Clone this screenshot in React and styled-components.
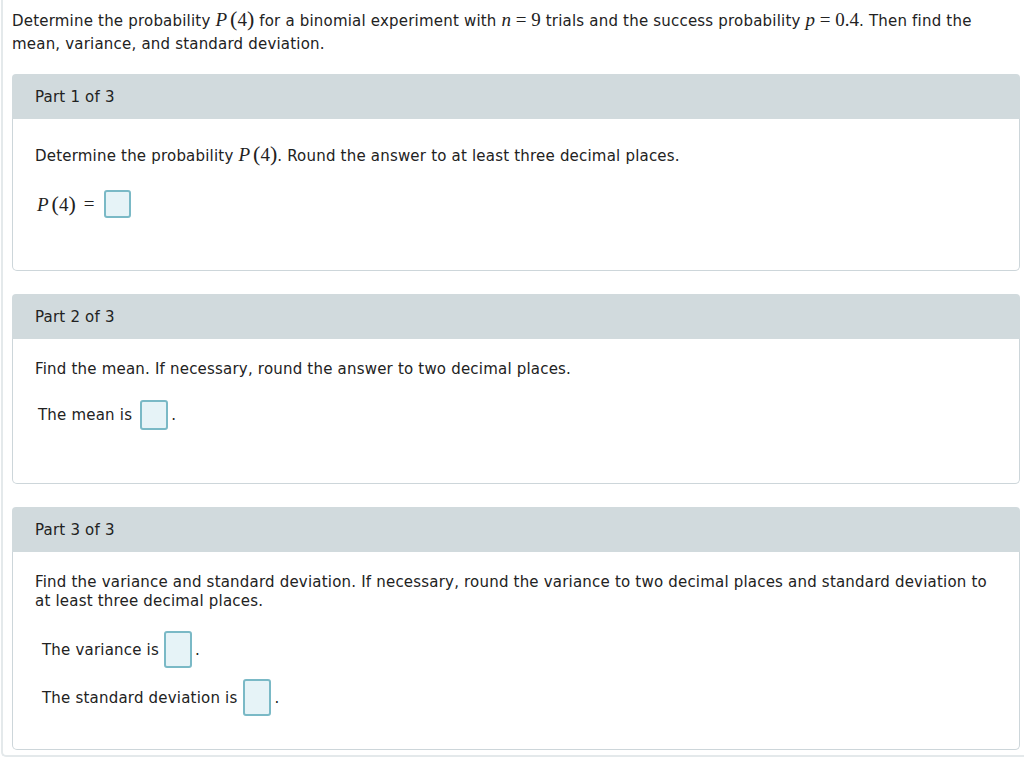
import styled, { createGlobalStyle } from "styled-components";

const GlobalStyle = createGlobalStyle`
  body {
    margin: 0;
    background: #fff;
    font-family: "DejaVu Sans", Verdana, sans-serif;
    font-size: 15px;
    letter-spacing: 0.2px;
    color: #222;
  }
`;

// OUTER FRAME
const Frame = styled.div`
  margin-left: 1px;
  height: 748px;
  border-left: 2px solid #e4e9eb;
  border-bottom: 2px solid #e4e9eb;
  border-bottom-left-radius: 5px;
  padding: 7px 4px 0 9px;
`;

const Intro = styled.p`
  margin: 0 0 18px;
  line-height: 23px;
`;

const Panel = styled.section`
  margin-bottom: 23px;
`;

const Header = styled.div`
  height: 45px;
  display: flex;
  align-items: center;
  padding-left: 23px;
  background: #d1dadd;
  border-radius: 4px 4px 0 0;
`;

const Body = styled.div`
  box-sizing: border-box;
  height: ${(props) => props.h}px;
  padding: 21px 22px 0;
  border: 1px solid #cdd6da;
  border-top: none;
  border-radius: 0 0 5px 5px;
  background: #fff;
`;

const Text = styled.p`
  margin: 0;
  line-height: ${(props) => (props.tall ? "28px" : "19px")};
`;

const Row = styled.div`
  display: flex;
  align-items: center;
  margin-top: ${(props) => props.mt}px;
  padding-left: ${(props) => props.indent || 0}px;
`;

const Box = styled.span`
  display: inline-block;
  box-sizing: border-box;
  width: ${(props) => props.w}px;
  height: ${(props) => props.h}px;
  margin: 0 3px 0 ${(props) => props.ml || 7}px;
  background: #e6f3f7;
  border: 2px solid #7ab9c6;
  border-radius: 3px;
`;

const Math = styled.span`
  font-family: "Liberation Serif", "DejaVu Serif", serif;
  font-size: 19px;
  letter-spacing: 0;
  white-space: nowrap;
`;

const It = styled.i`
  font-style: italic;
`;

const Paren = styled.span`
  font-size: 22px;
  margin-left: ${(props) => (props.left ? "3px" : 0)};
`;

const Equals = styled.span`
  margin-left: 8px;
`;

const P4 = () => (
  <Math>
    <It>P</It>
    <Paren left>(</Paren>4<Paren>)</Paren>
  </Math>
);

const App = () => {
  return (
    <>
      <GlobalStyle />
      <Frame>
        <Intro>
          Determine the probability <P4 /> for a binomial experiment with{" "}
          <Math>
            <It>n</It> = 9
          </Math>{" "}
          trials and the success probability{" "}
          <Math>
            <It>p</It> = 0.4
          </Math>
          . Then find the mean, variance, and standard deviation.
        </Intro>

        {/* PART 1 */}
        <Panel>
          <Header>Part 1 of 3</Header>
          <Body h={152}>
            <Text tall>
              Determine the probability <P4 />. Round the answer to at least three decimal places.
            </Text>
            <Row mt={20} indent={2}>
              <P4 />
              <Math>
                <Equals>=</Equals>
              </Math>
              <Box w={27} h={28} ml={10} />
            </Row>
          </Body>
        </Panel>

        {/* PART 2 */}
        <Panel>
          <Header>Part 2 of 3</Header>
          <Body h={145}>
            <Text>Find the mean. If necessary, round the answer to two decimal places.</Text>
            <Row mt={21} indent={3}>
              The mean is
              <Box w={28} h={30} ml={8} />.
            </Row>
          </Body>
        </Panel>

        {/* PART 3 */}
        <Panel>
          <Header>Part 3 of 3</Header>
          <Body h={198}>
            <Text>
              Find the variance and standard deviation. If necessary, round the variance to two
              decimal places and standard deviation to at least three decimal places.
            </Text>
            <Row mt={20} indent={7}>
              The variance is
              <Box w={28} h={37} ml={5} />.
            </Row>
            <Row mt={11} indent={7}>
              The standard deviation is
              <Box w={28} h={37} ml={6} />.
            </Row>
          </Body>
        </Panel>
      </Frame>
    </>
  );
};

export default App;
